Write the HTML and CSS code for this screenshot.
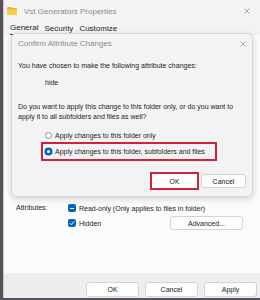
FILE: index.html
```html
<!DOCTYPE html>
<html lang="en">
<head>
    <meta charset="UTF-8">
    <meta name="viewport" content="width=device-width, initial-scale=1.0">
    <title>Vst Generators Properties</title>
    <link rel="stylesheet" href="styles.css">
</head>
<body>
    <div class="window">
        <div class="titlebar">
            <svg class="folder" width="10" height="8" viewBox="0 0 10 8">
                <path d="M0 1 Q0 0 1 0 H4 L5 1 H9 Q10 1 10 2 V7 Q10 8 9 8 H1 Q0 8 0 7 Z" fill="#e8b530"/>
                <path d="M0 2.5 H10 V7 Q10 8 9 8 H1 Q0 8 0 7 Z" fill="#f8cf4a"/>
            </svg>
            <span class="title">Vst Generators Properties</span>
            <svg class="close" width="6" height="6" viewBox="0 0 6 6">
                <path d="M0.5 0.5 L5.5 5.5 M5.5 0.5 L0.5 5.5" stroke="#8e8e8e" stroke-width="0.8"/>
            </svg>
        </div>
        <div class="tabs">
            <span class="tab active">General</span>
            <span class="tab">Security</span>
            <span class="tab">Customize</span>
        </div>
        <div class="panel">
            <div class="attr-row">
                <span class="attr-label">Attributes:</span>
                <div class="attr-checks">
                    <div class="check-line">
                        <span class="box"><span class="dash"></span></span>
                        <span>Read-only (Only applies to files in folder)</span>
                    </div>
                    <div class="check-line second">
                        <span class="box">
                            <svg width="8" height="8" viewBox="0 0 8 8">
                                <path d="M1.8 4.2 L3.3 5.6 L6.3 2.4" fill="none" stroke="#fff" stroke-width="1"/>
                            </svg>
                        </span>
                        <span>Hidden</span>
                        <button class="btn adv">Advanced...</button>
                    </div>
                </div>
            </div>
        </div>
        <div class="footer">
            <button class="btn">OK</button>
            <button class="btn">Cancel</button>
            <button class="btn">Apply</button>
        </div>

        <!-- modal that sits over the properties window -->
        <div class="dialog">
            <div class="dlg-title">
                <span>Confirm Attribute Changes</span>
                <svg class="close" width="6" height="6" viewBox="0 0 6 6">
                    <path d="M0.5 0.5 L5.5 5.5 M5.5 0.5 L0.5 5.5" stroke="#9a9a9a" stroke-width="0.8"/>
                </svg>
            </div>
            <p class="msg">You have chosen to make the following attribute changes:</p>
            <p class="value">hide</p>
            <p class="question">Do you want to apply this change to this folder only, or do you want to<br>apply it to all subfolders and files as well?</p>
            <div class="radio">
                <span class="circle"></span>
                <span>Apply changes to this folder only</span>
            </div>
            <div class="radio marked">
                <span class="circle on"></span>
                <span>Apply changes to this folder, subfolders and files</span>
            </div>
            <div class="dlg-buttons">
                <button class="btn ok">OK</button>
                <button class="btn cancel">Cancel</button>
            </div>
        </div>
    </div>
</body>
</html>
```

FILE: styles.css
```css
*{
    padding: 0;
    margin: 0;
    box-sizing: border-box;
}
body{
    background: #56515b;
    font-family: "Liberation Sans", Arial, sans-serif;
    font-size: 7px;
    color: #1c1c1c;
    overflow: hidden;
}
.window{
    position: relative;
    width: 257px;
    height: 298px;
    margin-left: 3px;
    display: flex;
    flex-direction: column;
    background: #f3f3f3;
    border-left: 1px solid #c9c9c9;
}
.titlebar{
    height: 22px;
    display: flex;
    align-items: center;
    padding-left: 3px;
}
.folder{
    margin-right: 7px;
}
.title{
    font-size: 8px;
    color: #8c8c8c;
}
.titlebar .close{
    margin-left: auto;
    margin-right: 10px;
}
.tabs{
    height: 13px;
    display: flex;
    align-items: flex-end;
    padding-left: 6px;
    gap: 6px;
    font-size: 8px;
    color: #222;
}
.tab{
    line-height: 12px;
}
.tab.active{
    border-bottom: 1px solid #333;
}
.panel{
    flex: 1;
    background: #fbfbfb;
    padding: 168px 0 0 12px;
}
.attr-row{
    display: flex;
}
.attr-label{
    width: 52px;
    line-height: 10px;
}
.attr-checks{
    width: 175px;
}
.check-line{
    display: flex;
    align-items: center;
    height: 10px;
}
.check-line.second{
    height: 14px;
    margin-top: 3px;
}
.box{
    width: 8px;
    height: 8px;
    border-radius: 2px;
    background: #0067c0;
    margin-right: 3px;
    display: flex;
    align-items: center;
    justify-content: center;
}
.dash{
    width: 4px;
    height: 1px;
    background: #fff;
}
.btn{
    font-family: "Liberation Sans", Arial, sans-serif;
    font-size: 7px;
    color: #1c1c1c;
    background: #fdfdfd;
    border: 1px solid #d3d3d3;
    border-radius: 3px;
}
.adv{
    margin-left: auto;
    width: 73px;
    height: 14px;
}
.footer{
    height: 25px;
    background: #eeeeee;
    display: flex;
    justify-content: flex-end;
    gap: 6px;
    padding: 9px 3px 0 0;
}
.footer .btn{
    width: 53px;
    height: 15px;
}
.dialog{
    position: absolute;
    left: 7px;
    top: 33px;
    width: 242px;
    height: 164px;
    background: #f3f3f3;
    border: 1px solid #d6d6d6;
    border-radius: 5px;
    box-shadow: 0 2px 6px rgba(0, 0, 0, 0.16);
    padding: 0 6px;
}
.dlg-title{
    height: 19px;
    display: flex;
    align-items: center;
    justify-content: space-between;
    font-size: 8px;
    color: #8a8a8a;
}
.msg, .value, .question{
    line-height: 10px;
}
.msg{
    margin-top: 8px;
}
.value{
    margin-top: 7px;
    padding-left: 27px;
}
.question{
    margin-top: 14px;
}
.radio{
    display: flex;
    align-items: center;
    height: 10px;
    margin-top: 8px;
    padding-left: 27px;
}
.radio.marked{
    width: 176px;
    height: 19px;
    margin: 2px 0 0 23px;
    padding-left: 2px;
    border: 2px solid #d2213a;
}
.circle{
    width: 7px;
    height: 7px;
    border-radius: 50%;
    border: 1px solid #8a8a8a;
    background: #fff;
    margin-right: 3px;
}
.circle.on{
    border: 2px solid #0067c0;
    background: #fff;
    box-shadow: 0 0 0 0.5px #0067c0;
}
.dlg-buttons{
    display: flex;
    justify-content: flex-end;
    align-items: center;
    gap: 2px;
    margin-top: 11px;
}
.dlg-buttons .ok{
    width: 49px;
    height: 18px;
    border: 2px solid #d2213a;
    border-radius: 0;
    background: #fff;
}
.dlg-buttons .cancel{
    width: 45px;
    height: 14px;
}
```
